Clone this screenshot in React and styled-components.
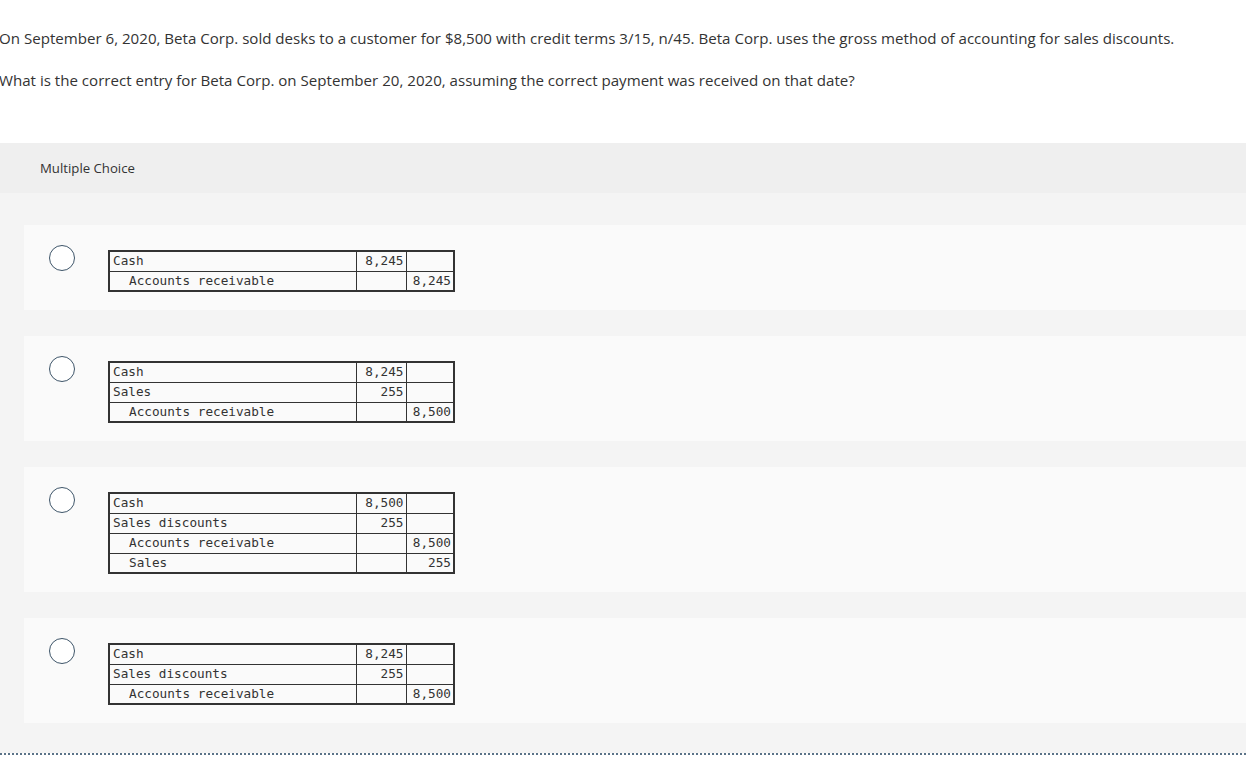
import React from 'react';
import styled, { createGlobalStyle } from 'styled-components';

const GlobalStyle = createGlobalStyle`
    html, body {
        margin: 0;
        padding: 0;
        background: #fff;
    }
    body {
        font-family: "Open Sans", "Noto Sans", sans-serif;
        color: #333;
    }
`;

const choices = [
    [
        { account: 'Cash', debit: '8,245' },
        { account: 'Accounts receivable', credit: '8,245', indent: true },
    ],
    [
        { account: 'Cash', debit: '8,245' },
        { account: 'Sales', debit: '255' },
        { account: 'Accounts receivable', credit: '8,500', indent: true },
    ],
    [
        { account: 'Cash', debit: '8,500' },
        { account: 'Sales discounts', debit: '255' },
        { account: 'Accounts receivable', credit: '8,500', indent: true },
        { account: 'Sales', credit: '255', indent: true },
    ],
    [
        { account: 'Cash', debit: '8,245' },
        { account: 'Sales discounts', debit: '255' },
        { account: 'Accounts receivable', credit: '8,500', indent: true },
    ],
];

function Entry({ rows }) {
    return (
        <Journal>
            <colgroup>
                <col style={{ width: 247 }} />
                <col style={{ width: 50 }} />
                <col style={{ width: 48 }} />
            </colgroup>
            <tbody>
                {rows.map((row, i) => (
                    <tr key={i}>
                        <AccountCell $indent={row.indent}>{row.account}</AccountCell>
                        <AmountCell>{row.debit || ''}</AmountCell>
                        <AmountCell>{row.credit || ''}</AmountCell>
                    </tr>
                ))}
            </tbody>
        </Journal>
    );
}

export default function App() {
    return (
        <Page>
            <GlobalStyle />
            <Question>
                <p>On September 6, 2020, Beta Corp. sold desks to a customer for $8,500 with credit terms 3/15, n/45. Beta Corp. uses the gross method of accounting for sales discounts.</p>
                <p>What is the correct entry for Beta Corp. on September 20, 2020, assuming the correct payment was received on that date?</p>
            </Question>
            <ChoiceHeader>Multiple Choice</ChoiceHeader>
            <ChoiceList>
                {choices.map((rows, i) => (
                    <Choice key={i}>
                        <Radio />
                        <Entry rows={rows} />
                    </Choice>
                ))}
            </ChoiceList>
            <DottedRule />
        </Page>
    );
}

const Page = styled.div`
    width: 1246px;
    min-height: 760px;
    background: #fff;
`;

const Question = styled.div`
    padding-top: 29px;
    height: 143px;
    box-sizing: border-box;
    p {
        margin: 0 0 23px -1px;
        font-size: 15.1px;
        line-height: 19px;
        color: #333;
        white-space: nowrap;
    }
`;

const ChoiceHeader = styled.div`
    height: 50px;
    background: #efefef;
    padding-left: 40px;
    display: flex;
    align-items: center;
    font-size: 13.2px;
    color: #333;
`;

const ChoiceList = styled.div`
    background: #f4f4f4;
    padding: 32px 0 30px 24px;
    display: flex;
    flex-direction: column;
    gap: 26px;
`;

const Choice = styled.div`
    background: #fafafa;
    display: flex;
    align-items: flex-start;
    padding: 25px 0 18px 25px;
    gap: 33px;
`;

const Radio = styled.span`
    width: 24px;
    height: 24px;
    margin-top: -5px;
    border: 1.5px solid #3e5569;
    border-radius: 50%;
    background: #fff;
    flex: none;
`;

const Journal = styled.table`
    border-collapse: collapse;
    border: 2px solid #333;
    width: 345px;
    table-layout: fixed;
    font-family: "DejaVu Sans Mono", "Liberation Mono", monospace;
    font-size: 12.7px;
    color: #333;
    td {
        border: 1px solid #333;
        height: 20px;
        padding: 0 2px;
        line-height: 18px;
        box-sizing: border-box;
        white-space: nowrap;
    }
`;

const AccountCell = styled.td`
    text-align: left;
    && {
        padding-left: ${p => (p.$indent ? '19px' : '3px')};
    }
`;

const AmountCell = styled.td`
    text-align: right;
`;

const DottedRule = styled.div`
    height: 2px;
    background-image: linear-gradient(to right, #5b7388 50%, transparent 50%);
    background-size: 4px 2px;
`;
